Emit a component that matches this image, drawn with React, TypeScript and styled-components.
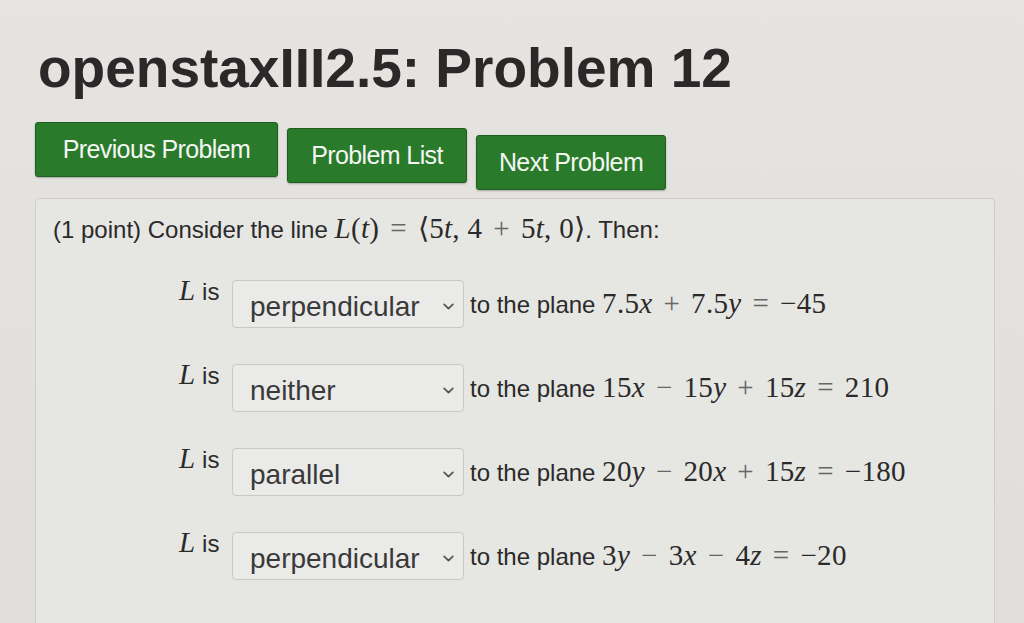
import React from 'react';
import styled, { createGlobalStyle } from 'styled-components';

const GlobalStyle = createGlobalStyle`
  html, body {
    margin: 0;
    padding: 0;
    background: #e3e2de;
    font-family: "Liberation Sans", Arial, sans-serif;
    color: #2b2a2a;
  }
`;

const Page = styled.div`
  width: 1024px;
  height: 623px;
  overflow: hidden;
  box-sizing: border-box;
  padding: 36px 29px 0 35px;
  background: linear-gradient(180deg, #e5e4e0 0%, #dfdedb 100%);
`;

const Title = styled.h1`
  margin: 0 0 0 3px;
  font-size: 55px;
  line-height: 64px;
  font-weight: 700;
  color: #2a2828;
`;

const NavBar = styled.div`
  display: flex;
  align-items: flex-start;
  gap: 9px;
  margin-top: 22px;
`;

const NavButton = styled.button<{ offset: number; width: number }>`
  margin-top: ${({ offset }) => offset}px;
  width: ${({ width }) => width}px;
  height: 55px;
  border: 1px solid #1e5e1e;
  border-radius: 3px;
  background: #2a7a2c;
  color: #f4f6f2;
  font-family: "Liberation Sans", Arial, sans-serif;
  font-size: 25px;
  letter-spacing: -0.6px;
  cursor: pointer;
  box-shadow: 0 1px 2px rgba(0, 0, 0, 0.25);
`;

const ProblemBox = styled.div`
  margin-top: 8px;
  height: 440px;
  box-sizing: border-box;
  border: 1px solid #cfcecb;
  border-radius: 4px;
  background: #e6e6e3;
  padding: 13px 0 0 17px;
`;

const Intro = styled.p`
  margin: 0;
  font-size: 24px;
  line-height: 32px;
  color: #2b2a2a;
`;

const Rows = styled.div`
  display: flex;
  flex-direction: column;
  gap: 36px;
  margin-top: 34px;
  padding-left: 126px;
`;

const Row = styled.div`
  display: flex;
  align-items: center;
`;

const Lead = styled.span`
  align-self: flex-start;
  margin-top: -6px;
  width: 53px;
  font-size: 24px;
  line-height: 32px;
`;

const Select = styled.div`
  display: flex;
  align-items: center;
  justify-content: space-between;
  width: 232px;
  height: 48px;
  box-sizing: border-box;
  padding: 5px 8px 0 17px;
  border: 1px solid #c9c8c5;
  border-radius: 4px;
  background: #eaeae8;
  font-size: 28px;
  color: #3a3939;
`;

const Chevron = styled.svg`
  width: 13px;
  height: 13px;
  flex-shrink: 0;
`;

const Plane = styled.span`
  margin-left: 6px;
  font-size: 24px;
  line-height: 32px;
`;

const M = styled.span`
  font-family: "Liberation Serif", "Times New Roman", serif;
  font-size: 29px;
  letter-spacing: 0.3px;
`;

const V = styled.i`
  font-family: "Liberation Serif", "Times New Roman", serif;
  font-style: italic;
`;

const Op = styled.span`
  margin: 0 11px;
  color: #666;
`;

type Term = { t: string; v?: boolean; op?: boolean };

const Math = ({ terms }: { terms: Term[] }) => (
  <M>
    {terms.map((term, i) =>
      term.op ? <Op key={i}>{term.t}</Op> : term.v ? <V key={i}>{term.t}</V> : <span key={i}>{term.t}</span>
    )}
  </M>
);

const n = (t: string): Term => ({ t });
const v = (t: string): Term => ({ t, v: true });
const o = (t: string): Term => ({ t, op: true });

const rows: { choice: string; eq: Term[] }[] = [
  { choice: 'perpendicular', eq: [n('7.5'), v('x'), o('+'), n('7.5'), v('y'), o('='), n('−45')] },
  { choice: 'neither', eq: [n('15'), v('x'), o('−'), n('15'), v('y'), o('+'), n('15'), v('z'), o('='), n('210')] },
  { choice: 'parallel', eq: [n('20'), v('y'), o('−'), n('20'), v('x'), o('+'), n('15'), v('z'), o('='), n('−180')] },
  { choice: 'perpendicular', eq: [n('3'), v('y'), o('−'), n('3'), v('x'), o('−'), n('4'), v('z'), o('='), n('−20')] },
];

export default function App() {
  return (
    <Page>
      <GlobalStyle />
      <Title>openstaxIII2.5: Problem 12</Title>
      <NavBar>
        <NavButton offset={0} width={243}>Previous Problem</NavButton>
        <NavButton offset={6} width={180}>Problem List</NavButton>
        <NavButton offset={13} width={190}>Next Problem</NavButton>
      </NavBar>
      <ProblemBox>
        <Intro>
          (1 point) Consider the line{' '}
          <Math terms={[v('L'), n('('), v('t'), n(')'), o('='), n('⟨5'), v('t'), n(', 4'), o('+'), n('5'), v('t'), n(', 0⟩')]} />
          . Then:
        </Intro>
        <Rows>
          {rows.map((row, i) => (
            <Row key={i}>
              <Lead>
                <Math terms={[v('L')]} /> is
              </Lead>
              <Select>
                {row.choice}
                <Chevron viewBox="0 0 12 12">
                  <path d="M2 4l4 4 4-4" fill="none" stroke="#555" strokeWidth="1.6" strokeLinecap="round" strokeLinejoin="round" />
                </Chevron>
              </Select>
              <Plane>
                to the plane <Math terms={row.eq} />
              </Plane>
            </Row>
          ))}
        </Rows>
      </ProblemBox>
    </Page>
  );
}
